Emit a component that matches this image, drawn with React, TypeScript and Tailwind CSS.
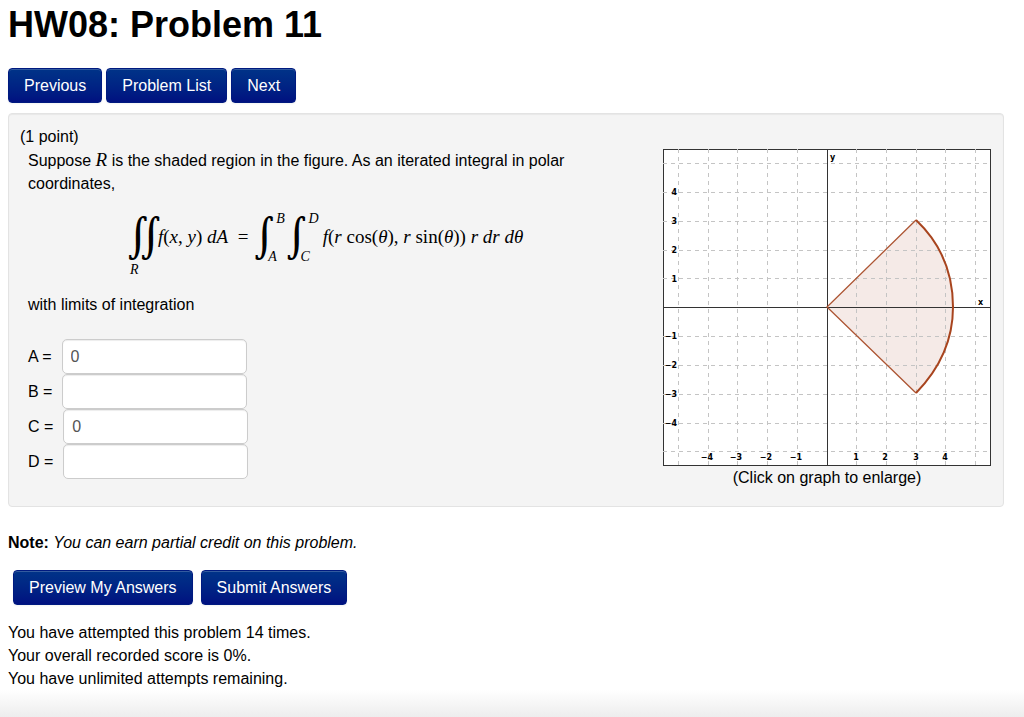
import { useState } from 'react'

type AnswerKey = 'A' | 'B' | 'C' | 'D'

const ANSWER_KEYS: AnswerKey[] = ['A', 'B', 'C', 'D']

const NAV_LINKS = ['Previous', 'Problem List', 'Next']

const buttonClass =
  'inline-flex h-[35px] cursor-pointer items-center rounded border border-[#001a80] bg-linear-to-b from-[#003388] to-[#001080] px-[15px] text-base text-white shadow-[inset_0_1px_0_rgba(255,255,255,0.2),0_1px_2px_rgba(0,0,0,0.05)]'

// Graph geometry, in svg pixels
const GRAPH_W = 328
const GRAPH_H = 317
const ORIGIN_X = 164
const ORIGIN_Y = 158
const GRID_X = [15, 45, 74, 104, 134, 193, 223, 253, 282, 312]
const GRID_Y = [14, 43, 72, 101, 129, 187, 216, 245, 274, 302]

const X_LABELS = [
  { x: 44, text: '−4' }, { x: 73, text: '−3' }, { x: 103, text: '−2' }, { x: 133, text: '−1' },
  { x: 193, text: '1' }, { x: 222, text: '2' }, { x: 253, text: '3' }, { x: 282, text: '4' },
]

const Y_LABELS = [
  { y: 43, text: '4' }, { y: 72, text: '3' }, { y: 101, text: '2' }, { y: 130, text: '1' },
  { y: 187, text: '−1' }, { y: 216, text: '−2' }, { y: 245, text: '−3' }, { y: 274, text: '−4' },
]

function RegionGraph() {
  return (
    <svg width={GRAPH_W} height={GRAPH_H} viewBox={`0 0 ${GRAPH_W} ${GRAPH_H}`} role="img" aria-label="Region R">
      <rect width={GRAPH_W} height={GRAPH_H} fill="#fff" />

      {/* Shaded sector */}
      <path d="M164 158 L253 71 Q290 106 290 158 Q290 206 253 244 Z" fill="#f5eae7" />

      {/* Axes and frame */}
      <g stroke="#333" strokeWidth="1">
        <line x1={ORIGIN_X + 0.5} x2={ORIGIN_X + 0.5} y1="0" y2={GRAPH_H} />
        <line x1="0" x2={GRAPH_W} y1={ORIGIN_Y + 0.5} y2={ORIGIN_Y + 0.5} />
        <rect x="0.5" y="0.5" width={GRAPH_W - 1} height={GRAPH_H - 1} fill="none" />
      </g>

      {/* Grid */}
      <g stroke="#c4c4c4" strokeWidth="1" strokeDasharray="4 4">
        {GRID_X.map((x) => <line key={x} x1={x + 0.5} x2={x + 0.5} y1="0" y2={GRAPH_H} />)}
        {GRID_Y.map((y) => <line key={y} x1="0" x2={GRAPH_W} y1={y + 0.5} y2={y + 0.5} />)}
      </g>

      {/* Sector outline */}
      <path d="M253 71 L164 158 L253 244" fill="none" stroke="#ad5533" strokeWidth="1.3" />
      <path d="M253 71 Q290 106 290 158 Q290 206 253 244" fill="none" stroke="#a8441e" strokeWidth="2" />

      <g className="font-['DejaVu_Sans',sans-serif] text-[8px] font-bold" fill="#000">
        {X_LABELS.map((l) => <text key={l.text} x={l.x} y="311" textAnchor="middle">{l.text}</text>)}
        {Y_LABELS.map((l) => <text key={l.text} x="14" y={l.y + 3} textAnchor="end">{l.text}</text>)}
        <text x="167" y="11">y</text>
        <text x="315" y="156">x</text>
      </g>
    </svg>
  )
}

function Integral({ lower, upper }: { lower: string; upper: string }) {
  return (
    <span className="flex">
      <span className="font-['DejaVu_Math_TeX_Gyre','Liberation_Serif',serif] text-[40px] leading-[50px]">∫</span>
      <span className="-ml-2 flex h-[52px] flex-col justify-between text-sm leading-[14px]">
        <i className="ml-2">{upper}</i>
        <i>{lower}</i>
      </span>
    </span>
  )
}

function Equation() {
  return (
    <div className="mt-[17px] flex items-start pl-[102px] font-['Liberation_Serif',serif] text-[19px]">
      <div className="flex w-7 flex-col">
        <span className="-ml-1 font-['DejaVu_Math_TeX_Gyre','Liberation_Serif',serif] text-[40px] leading-[50px]">∬</span>
        <i className="text-sm leading-4">R</i>
      </div>
      <span className="mr-1 leading-[50px] whitespace-pre"><i>f</i>(<i>x</i>, <i>y</i>) <i>dA</i>  =</span>
      <Integral lower="A" upper="B" />
      <Integral lower="C" upper="D" />
      <span className="ml-1 leading-[50px] whitespace-pre">
        <i>f</i>(<i>r</i> cos(<i>θ</i>), <i>r</i> sin(<i>θ</i>)) <i>r dr dθ</i>
      </span>
    </div>
  )
}

export default function App() {
  const [answers, setAnswers] = useState<Record<AnswerKey, string>>({ A: '0', B: '', C: '0', D: '' })

  return (
    <div className="min-h-screen bg-white font-['Liberation_Sans',Arial,sans-serif] text-base leading-[23px] text-black">
      <main className="pr-5 pl-2">
        <h1 className="pt-[5px] text-4xl leading-[40px] font-bold">HW08: Problem 11</h1>

        <nav className="mt-[23px] flex gap-1">
          {NAV_LINKS.map((label) => <a key={label} href="#" className={buttonClass}>{label}</a>)}
        </nav>

        <form onSubmit={(e) => e.preventDefault()}>
          {/* Problem body */}
          <section className="mt-[10px] flex items-start gap-16 rounded border border-[#e3e3e3] bg-[#f4f4f4] pt-[11px] pr-3 pb-[17px] pl-[11px] shadow-[inset_0_1px_1px_rgba(0,0,0,0.05)]">
            <div className="min-w-0 flex-1">
              <p>(1 point)</p>
              <div className="pl-2">
                <p>
                  Suppose <i className="font-['Liberation_Serif',serif] text-[19px]">R</i> is the shaded region in the figure. As an iterated integral in polar coordinates,
                </p>
                <Equation />
                <p className="mt-[15px]">with limits of integration</p>
                <div className="mt-[23px]">
                  {ANSWER_KEYS.map((key) => (
                    <div key={key} className="flex items-center gap-[10px]">
                      <label htmlFor={`answer-${key}`}>{key} =</label>
                      <input
                        id={`answer-${key}`}
                        type="text"
                        value={answers[key]}
                        onChange={(e) => setAnswers({ ...answers, [key]: e.target.value })}
                        className="h-[35px] w-[185px] rounded-[5px] border border-[#ccc] bg-white px-2 text-[#555] shadow-[inset_0_1px_1px_rgba(0,0,0,0.075)]"
                      />
                    </div>
                  ))}
                </div>
              </div>
            </div>

            <a href="#" className="mt-6 flex flex-col items-center">
              <RegionGraph />
              <span>(Click on graph to enlarge)</span>
            </a>
          </section>

          <p className="mt-6"><b>Note:</b> <i>You can earn partial credit on this problem.</i></p>

          <div className="mt-4 flex gap-2 pl-[5px]">
            <button type="button" className={buttonClass}>Preview My Answers</button>
            <button type="submit" className={buttonClass}>Submit Answers</button>
          </div>
        </form>

        <p className="mt-4">
          You have attempted this problem 14 times.<br />
          Your overall recorded score is 0%.<br />
          You have unlimited attempts remaining.
        </p>
      </main>

      <footer className="h-[27px] bg-linear-to-b from-white to-[#ededed]" />
    </div>
  )
}
